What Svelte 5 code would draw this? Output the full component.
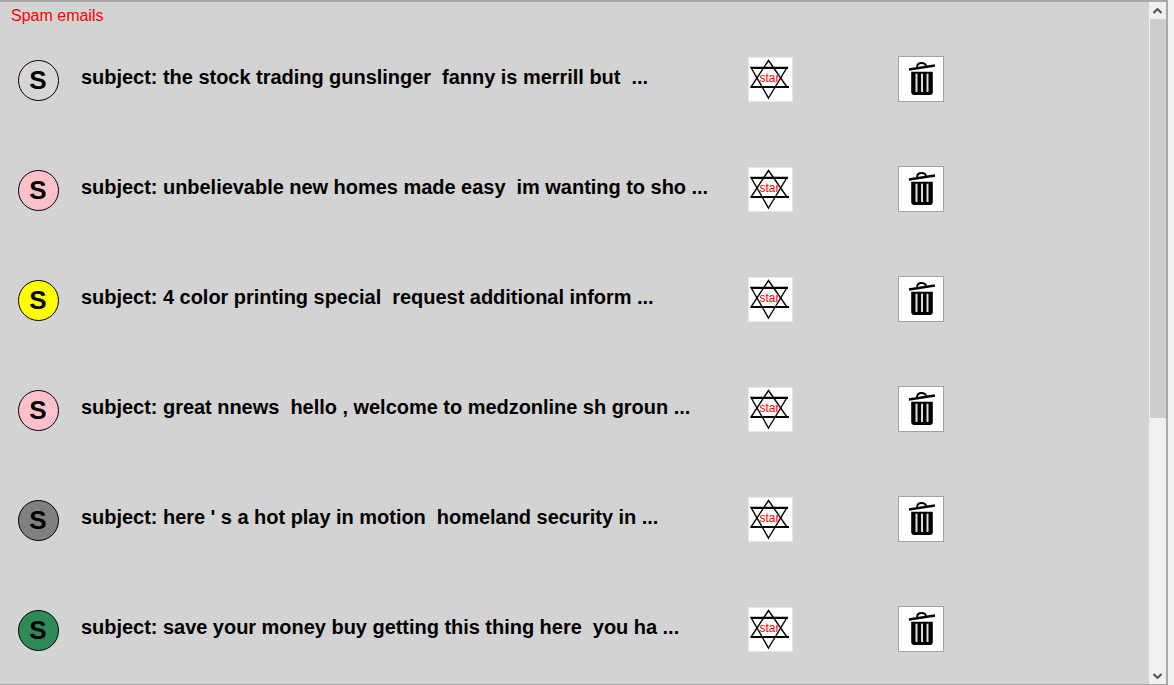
<script>
  const emails = [
    { color: "#d8d5d5", text: "subject: the stock trading gunslinger  fanny is merrill but  ..." },
    { color: "#ffc0cb", text: "subject: unbelievable new homes made easy  im wanting to sho ..." },
    { color: "#ffff00", text: "subject: 4 color printing special  request additional inform ..." },
    { color: "#ffc0cb", text: "subject: great nnews  hello , welcome to medzonline sh groun ..." },
    { color: "#808080", text: "subject: here ' s a hot play in motion  homeland security in ..." },
    { color: "#2e8b57", text: "subject: save your money buy getting this thing here  you ha ..." }
  ];
</script>

<div class="frame">
  <div class="page">
    <div class="title">Spam emails</div>
    <div class="list">
      {#each emails as email}
        <div class="row">
          <div class="avatar" style:background-color={email.color}>S</div>
          <div class="subject">{email.text}</div>
          <div class="star">
            <svg width="45" height="45" viewBox="0 0 45 45">
              <polygon points="20.500,3.500 39,30 3,30" fill="none" stroke="#000" stroke-width="1.4" />
              <polygon points="20.500,41 39,10.500 3,10.500" fill="none" stroke="#000" stroke-width="1.4" />
              <g shape-rendering="crispEdges">
                <rect x="3" y="10" width="37" height="2" fill="#000" />
                <rect x="3" y="29" width="38" height="2" fill="#000" />
              </g>
              <text x="21.500" y="25" text-anchor="middle" class="star-text">star</text>
            </svg>
          </div>
          <button class="trash" aria-label="delete">
            <svg width="28" height="36" viewBox="0 0 28 36">
              <path d="M2 8.500 L28 4.500" stroke="#000" stroke-width="2.400" fill="none" />
              <path d="M10 6.500 C10 2.500 12 2 14.500 2 C17 2 18.500 2.500 19 5" stroke="#000" stroke-width="1.800" fill="none" />
              <path d="M4.200 10.700 H25.800 V31 C25.800 33 24.500 34 23 34 H7 C5.500 34 4.200 33 4.200 31 Z" fill="#000" />
              <rect x="8.500" y="12.700" width="2" height="18.300" fill="#dcdcdc" />
              <rect x="14" y="12.700" width="2" height="18.300" fill="#dcdcdc" />
              <rect x="19.500" y="12.700" width="2" height="18.300" fill="#dcdcdc" />
            </svg>
          </button>
        </div>
      {/each}
    </div>
  </div>
  <div class="scrollbar">
    <div class="arrow">
      <svg width="9" height="6" viewBox="0 0 9 6"><path d="M0.5 5 L4.500 1 L8.500 5" fill="none" stroke="#505050" stroke-width="2" /></svg>
    </div>
    <div class="thumb"></div>
    <div class="track"></div>
    <div class="arrow">
      <svg width="9" height="6" viewBox="0 0 9 6"><path d="M0.5 1 L4.500 5 L8.500 1" fill="none" stroke="#505050" stroke-width="2" /></svg>
    </div>
  </div>
</div>

<style>
  :global(body) {
    margin: 0;
    background: #f0f0f0;
  }

  .frame {
    width: 1168px;
    height: 685px;
    box-sizing: border-box;
    display: flex;
    overflow: hidden;
    border-top: 2px solid #a9a9a9;
    border-right: 2px solid #a9a9a9;
    border-bottom: 1px solid #a9a9a9;
    font-family: "Liberation Sans", Arial, sans-serif;
  }

  .page {
    width: 1149px;
    flex: none;
    overflow: hidden;
    background: #d3d3d3;
  }

  .title {
    padding: 4px 0 0 11px;
    height: 20px;
    font-size: 16px;
    line-height: 20px;
    color: #ff0000;
  }

  .list {
    display: flex;
    flex-direction: column;
    gap: 64px;
    padding-top: 30px;
  }

  .row {
    display: grid;
    grid-template-columns: 41px 689px 150px 46px;
    align-items: center;
    height: 46px;
    padding-left: 18px;
  }

  .avatar {
    width: 41px;
    height: 41px;
    box-sizing: border-box;
    margin-top: 3px;
    border: 1px solid #000;
    border-radius: 50%;
    display: flex;
    align-items: center;
    justify-content: center;
    padding-right: 1px;
    font-size: 26px;
    font-weight: bold;
    color: #000;
  }

  .subject {
    padding-left: 22px;
    margin-top: -4px;
    font-size: 20px;
    font-weight: bold;
    letter-spacing: -0.03px;
    white-space: pre;
    color: #000;
  }

  .star {
    width: 45px;
    height: 45px;
    background: #fff;
    margin-top: 1px;
    box-shadow: inset 0 0 0 1px #e6e6e6;
  }

  .star svg {
    display: block;
  }

  .star-text {
    font-size: 12px;
    fill: #ff0000;
    font-family: "Liberation Sans", Arial, sans-serif;
  }

  .trash {
    width: 46px;
    height: 46px;
    box-sizing: border-box;
    padding: 0;
    border: 1px solid #a0a0a0;
    background: #fff;
    display: flex;
    align-items: center;
    justify-content: center;
  }

  .scrollbar {
    width: 17px;
    flex: none;
    display: flex;
    flex-direction: column;
    background: #f0f0f0;
  }

  .arrow {
    height: 17px;
    flex: none;
    display: flex;
    align-items: center;
    justify-content: center;
  }

  .thumb {
    height: 399px;
    flex: none;
    margin-left: 1px;
    background: #cdcdcd;
  }

  .track {
    flex: 1;
  }
</style>
